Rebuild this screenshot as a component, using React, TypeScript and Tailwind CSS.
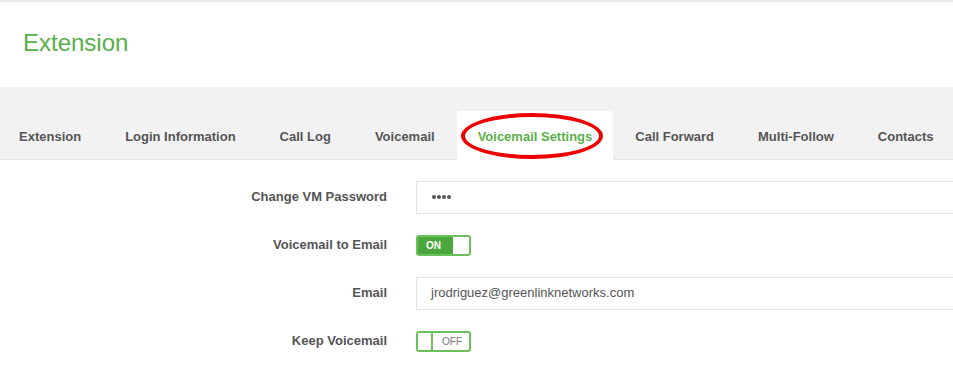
const tabs = [
  "Extension",
  "Login Information",
  "Call Log",
  "Voicemail",
  "Voicemail Settings",
  "Call Forward",
  "Multi-Follow",
  "Contacts",
];

function Toggle({ on }: { on: boolean }) {
  return (
    <div className="flex h-[21px] w-[55px] shrink-0 overflow-hidden rounded-[3px] border-2 border-[#6cc05c] bg-white">
      {on ? (
        <>
          <div className="flex w-[35px] items-center justify-center bg-[#4ba73d] pr-[4px] text-[10px] font-bold text-white">
            ON
          </div>
          <div className="flex-1 bg-white" />
        </>
      ) : (
        <>
          <div className="w-[15px] border-r-2 border-[#6cc05c] bg-white" />
          <div className="flex flex-1 items-center justify-center pl-[2px] text-[10px] text-[#777]">
            OFF
          </div>
        </>
      )}
    </div>
  );
}

function Row({ label, children }: { label: string; children: React.ReactNode }) {
  return (
    <div className="flex h-[34px] items-center">
      <div className="w-[387px] shrink-0 whitespace-nowrap text-right text-[13px] font-bold text-[#555]">
        {label}
      </div>
      <div className="ml-[29px] flex shrink-0 items-center">{children}</div>
    </div>
  );
}

export default function App() {
  return (
    <main
      className="h-[369px] w-[953px] overflow-hidden bg-white"
      style={{ fontFamily: '"Liberation Sans", Arial, sans-serif' }}
    >
      <div className="h-[2px] bg-[#e8e8e8]" />
      <header className="flex h-[85px] items-center px-[23px]">
        <h1 className="-mt-[3px] text-[24px] text-[#55b047]">Extension</h1>
      </header>

      <nav className="relative h-[73px] border-b border-[#e6e6e6] bg-[#f2f2f2]">
        <div className="ml-[-3px] flex h-full items-end">
          {tabs.map((tab) => {
            const active = tab === "Voicemail Settings";
            return (
              <div
                key={tab}
                className={
                  active
                    ? "relative -mb-px flex h-[49px] shrink-0 items-center whitespace-nowrap rounded-t-[3px] bg-white px-[21px] pt-[3px] text-[13px] font-bold text-[#5aaf4a]"
                    : "flex h-[48px] shrink-0 items-center whitespace-nowrap px-[22px] pt-[4px] text-[13px] font-bold text-[#555]"
                }
              >
                {tab}
                {active && (
                  <div className="pointer-events-none absolute left-[4px] top-[2px] h-[46px] w-[142px] rounded-[50%] border-[4px] border-[#ee0000]" />
                )}
              </div>
            );
          })}
        </div>
      </nav>

      <form className="flex flex-col gap-[14px] pt-[20px]">
        <Row label="Change VM Password">
          <div className="flex h-[33px] w-[560px] items-center gap-[1px] border border-[#e3e3e3] pl-[15px] text-[13px] text-[#555]">
            <span className="h-[4px] w-[4px] rounded-full bg-[#555]" />
            <span className="h-[4px] w-[4px] rounded-full bg-[#555]" />
            <span className="h-[4px] w-[4px] rounded-full bg-[#555]" />
            <span className="h-[4px] w-[4px] rounded-full bg-[#555]" />
          </div>
        </Row>
        <Row label="Voicemail to Email">
          <Toggle on />
        </Row>
        <Row label="Email">
          <div className="flex h-[33px] w-[560px] items-center border border-[#e3e3e3] pl-[14px] text-[13px] text-[#555]">
            jrodriguez@greenlinknetworks.com
          </div>
        </Row>
        <Row label="Keep Voicemail">
          <Toggle on={false} />
        </Row>
      </form>
    </main>
  );
}
